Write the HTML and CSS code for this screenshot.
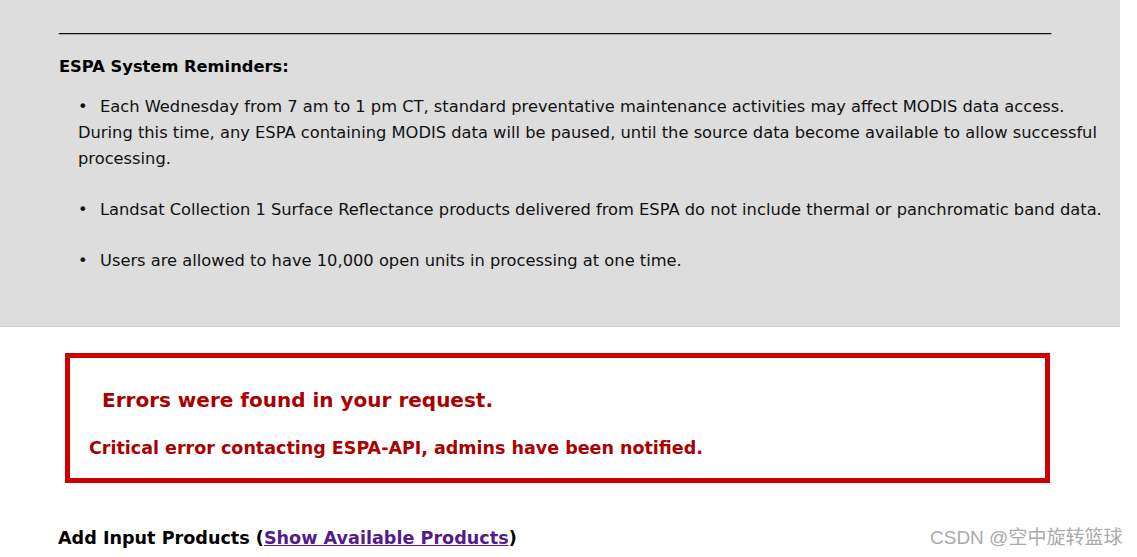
FILE: index.html
```html
<!DOCTYPE html>
<html>
<head>
<meta charset="utf-8">
<link rel="stylesheet" href="styles.css">
</head>
<body>
<div class="panel">
  <div class="rule">____________________________________________________________________________________________________________________________</div>
  <div class="title">ESPA System Reminders:</div>
  <ul class="reminders">
    <li>Each Wednesday from 7 am to 1 pm CT, standard preventative maintenance activities may affect MODIS data access. During this time, any ESPA containing MODIS data will be paused, until the source data become available to allow successful processing.</li>
    <li>Landsat Collection 1 Surface Reflectance products delivered from ESPA do not include thermal or panchromatic band data.</li>
    <li>Users are allowed to have 10,000 open units in processing at one time.</li>
  </ul>
</div>
<div class="errors">
  <div class="err-title">Errors were found in your request.</div>
  <div class="err-msg">Critical error contacting ESPA-API, admins have been notified.</div>
</div>
<div class="add">Add Input Products (<a href="#" class="link">Show Available Products</a>)</div>
<div class="watermark">CSDN @空中旋转篮球</div>
</body>
</html>
```
FILE: styles.css
```css
html, body {
  margin: 0;
  padding: 0;
  background: #ffffff;
  font-family: "DejaVu Sans", Verdana, sans-serif;
  color: #000;
}
body {
  width: 1137px;
  height: 557px;
  overflow: hidden;
  position: relative;
}
.panel {
  width: 1120px;
  height: 327px;
  box-sizing: border-box;
  background: #dddddd;
  border-bottom: 1px solid #cccccc;
  padding: 15px 14px 0 59px;
}
.rule {
  font-size: 16px;
  line-height: 20px;
  color: #111;
  white-space: nowrap;
}
.title {
  margin-top: 22px;
  font-size: 16.3px;
  font-weight: bold;
  line-height: 20px;
}
.reminders {
  margin: 17px 0 0 0;
  padding: 0 0 0 19px;
  list-style: none;
  font-size: 16.3px;
  line-height: 26px;
  color: #111;
}
.reminders li {
  margin-bottom: 25px;
}
.reminders li::before {
  content: "\2022";
  display: inline-block;
  width: 22px;
  text-indent: 0;
}
.errors {
  margin: 26px 0 0 65px;
  width: 985px;
  height: 130px;
  box-sizing: border-box;
  border: 5px solid #cc0000;
  padding: 30px 0 0 19px;
  color: #aa0000;
  font-weight: bold;
}
.err-title {
  font-size: 20px;
  line-height: 24px;
  padding-left: 13px;
}
.err-msg {
  margin-top: 26px;
  font-size: 17.5px;
  line-height: 20px;
}
.add {
  margin: 44px 0 0 58px;
  font-size: 17.6px;
  font-weight: bold;
  line-height: 22px;
}
.link {
  color: #551a8b;
}
.watermark {
  position: absolute;
  left: 930px;
  top: 527px;
  font-family: "Liberation Sans", "Noto Sans CJK SC", sans-serif;
  font-size: 19px;
  line-height: 22px;
  color: #aaaaaa;
}
```
